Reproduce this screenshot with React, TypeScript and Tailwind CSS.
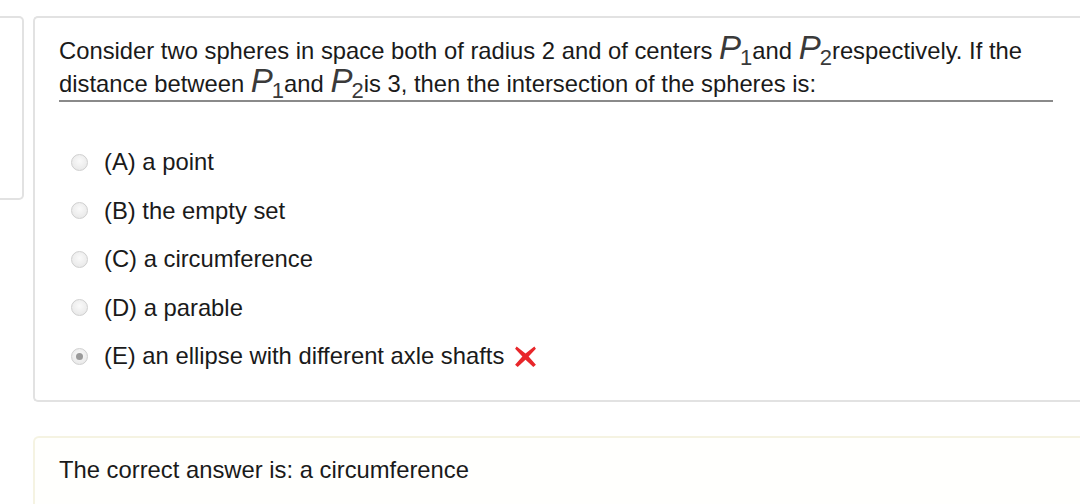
import React from "react";

const P = ({ n }: { n: string }) => (
  <span className="leading-[0px] text-[#3a3a3a]">
    <span className="italic text-[33px] leading-[0px]">P</span>
    <span className="text-[22px] leading-[0px] relative top-[6px] -ml-[1px]">{n}</span>
  </span>
);

const Radio = ({ checked }: { checked?: boolean }) => (
  <span className="w-[17px] h-[17px] rounded-full border border-[#cfcfcf] bg-[radial-gradient(circle_at_50%_40%,#fafafa,#e4e4e4)] flex items-center justify-center shrink-0">
    {checked && <span className="w-[7px] h-[7px] rounded-full bg-[#9a9a9a]" />}
  </span>
);

const options = [
  "(A) a point",
  "(B) the empty set",
  "(C) a circumference",
  "(D) a parable",
  "(E) an ellipse with different axle shafts",
];

export default function App() {
  return (
    <div className="w-[1080px] h-[504px] overflow-hidden bg-white text-[#1a1a1a]" style={{ fontFamily: '"Liberation Sans", Arial, sans-serif' }}>
      <div className="flex pt-[16px] gap-[9px]">
        <div className="w-[24px] h-[184px] shrink-0 border-2 border-l-0 border-[#e2e2e2] rounded-r-[5px]" />
        <div className="flex-1 flex flex-col">
          <div className="h-[386px] border-2 border-r-0 border-[#e2e2e2] rounded-l-[5px] pl-[24px] pr-[27px] pt-[16px]">
            <div className="text-[23.8px] leading-[33px] border-b-2 border-[#8a8a8a] pb-0">
              Consider two spheres in space both of radius 2 and of centers <P n="1" />and <P n="2" />respectively. If the distance between <P n="1" />and <P n="2" />is 3, then the intersection of the spheres is:
            </div>
            <div className="flex flex-col mt-[36px]">
              {options.map((o, i) => (
                <div key={o} className="flex items-center h-[48.5px] pl-[12px] gap-[16px]">
                  <Radio checked={i === 4} />
                  <span className="text-[23.8px]">{o}</span>
                  {i === 4 && (
                    <svg width="25" height="25" viewBox="0 0 24 24" className="-ml-[7px]">
                      <path d="M3.5 2.5 L12 9 L20.5 2.5 L22 4.5 L15 12 L22 20 L19.5 22 L12 15 L4.5 22 L2 20 L9 12 L2 4.5 Z" fill="#e8262a" />
                    </svg>
                  )}
                </div>
              ))}
            </div>
          </div>
          <div className="mt-[34px] h-[80px] border-2 border-r-0 border-b-0 border-[#f5f3e2] rounded-tl-[6px] bg-[#fffffd] pl-[24px] pt-[14px] text-[23.8px]">
            The correct answer is: a circumference
          </div>
        </div>
      </div>
    </div>
  );
}
